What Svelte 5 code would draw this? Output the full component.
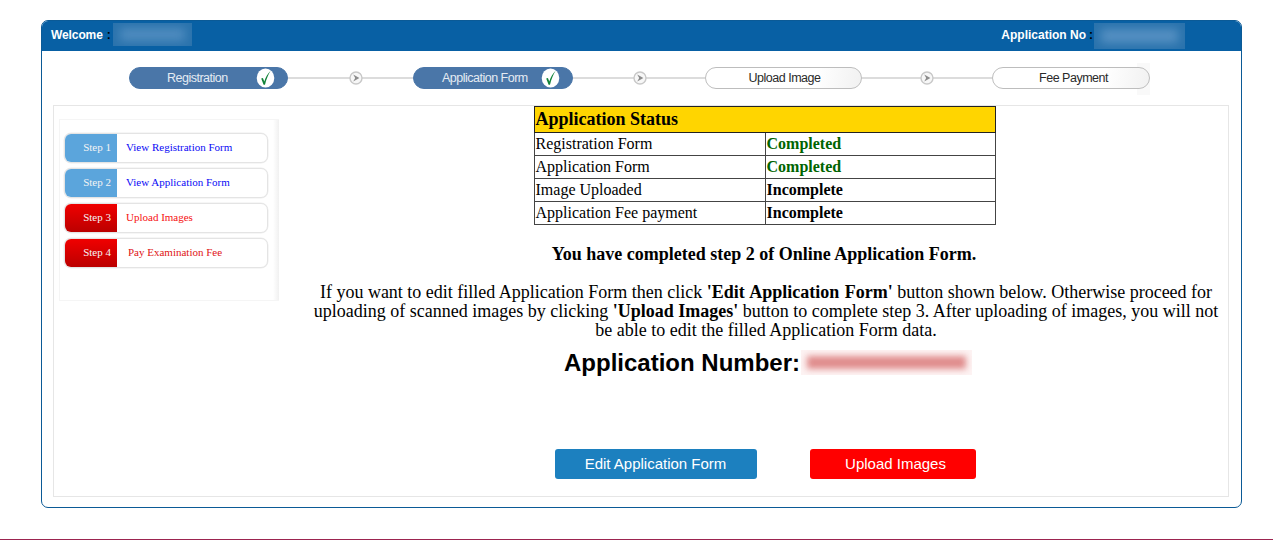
<script>
  const flow = [
    { label: 'Registration', done: true, w: 159, pad: 37, gap: 125, dot: 5, up: true },
    { label: 'Application Form', done: true, w: 160, pad: 28, gap: 132, dot: 1 },
    { label: 'Upload Image', done: false, w: 157, pad: 2, gap: 130, dot: 0, up: true },
    { label: 'Fee Payment', done: false, w: 158, pad: 5, last: true }
  ];
  const steps = [
    { n: 'Step 1', text: 'View Registration Form', kind: 'blue' },
    { n: 'Step 2', text: 'View Application Form', kind: 'blue' },
    { n: 'Step 3', text: 'Upload Images', kind: 'red' },
    { n: 'Step 4', text: 'Pay Examination Fee', kind: 'red', indent: true }
  ];
  const status = [
    ['Registration Form', 'Completed', true],
    ['Application Form', 'Completed', true],
    ['Image Uploaded', 'Incomplete', false],
    ['Application Fee payment', 'Incomplete', false]
  ];
</script>

<div class="page">
  <div class="panel">
    <header class="bar">
      <div class="who">
        <b>Welcome</b><em>:</em>
        <span class="redact name"><i></i></span>
      </div>
      <div class="who appno">
        <b>Application No</b><em>:</em>
        <span class="redact no"><i></i></span>
      </div>
    </header>

    <div class="flow">
      {#each flow as f, i}
        <div class="pill" class:done={f.done} class:last={f.last} style="width:{f.w}px;padding-left:{f.pad}px">
          <span class:up={f.up}>{f.label}</span>
          {#if f.done}
            <svg class="tick" width="19" height="20" viewBox="0 0 19 20" aria-hidden="true">
              <ellipse cx="9.5" cy="10" rx="8.8" ry="9.6" fill="#fff" />
              <path d="M5.2 10.6 L6.9 10 L8.3 13.4 C9.6 9.6 11.4 6 14.6 2.8 C12.2 6.8 10.2 11.4 9 16.8 L7.6 16.8 Z" fill="#12843a" />
            </svg>
          {/if}
        </div>
        {#if f.gap}
          <span class="link" style="width:{f.gap}px;padding-left:{f.dot * 2}px">
            <svg width="14" height="14" viewBox="0 0 14 14" aria-hidden="true">
              <circle cx="7" cy="7" r="6" fill="#f7f7f7" stroke="#c8c8c8" stroke-width="1.4" />
              <path d="M4.2 3.6 L10.4 7 L4.2 10.4 L6.2 7 Z" fill="#8c8c8c" />
            </svg>
          </span>
        {/if}
      {/each}
    </div>

    <div class="inner">
      <aside class="side">
        {#each steps as s}
          <div class="step">
            <span class="num {s.kind}">{s.n}</span>
            <span class="lbl {s.kind}" class:indent={s.indent}>{s.text}</span>
          </div>
        {/each}
      </aside>

      <main class="content">
        <table>
          <thead>
            <tr><th colspan="2">Application Status</th></tr>
          </thead>
          <tbody>
            {#each status as r}
              <tr>
                <td class="c1">{r[0]}</td>
                <td class="c2" class:ok={r[2]}>{r[1]}</td>
              </tr>
            {/each}
          </tbody>
        </table>

        <p class="lead">You have completed step 2 of Online Application Form.</p>

        <p class="info">
          If you want to edit filled Application Form then click <b class="wide">'Edit Application Form'</b> button shown below. Otherwise proceed for uploading of scanned images by clicking <b>'Upload Images'</b> button to complete step 3. After uploading of images, you will not be able to edit the filled Application Form data.
        </p>

        <div class="number">
          <b>Application Number:</b>
          <span class="redact pink"><i></i></span>
        </div>

        <div class="actions">
          <button class="btn edit">Edit Application Form</button>
          <button class="btn upload">Upload Images</button>
        </div>
      </main>
    </div>
  </div>
  <div class="rule"></div>
</div>

<style>
  :global(body) { margin: 0; background: #fff; }
  .page {
    height: 540px;
    box-sizing: border-box;
    padding: 20px 31px 0 41px;
    position: relative;
    overflow: hidden;
    font-family: "Liberation Serif", serif;
    color: #000;
  }
  .panel {
    height: 488px;
    box-sizing: border-box;
    border: 1px solid #0b5a96;
    border-radius: 7px;
    overflow: hidden;
  }
  .bar {
    height: 30px;
    background: #0860a4;
    display: flex;
    align-items: center;
    justify-content: space-between;
    font: bold 12px "Liberation Sans", sans-serif;
    color: #fff;
    padding: 0 56px 0 9px;
  }
  .who { display: flex; align-items: center; }
  .who b { margin-top: -2px; letter-spacing: -0.1px; }
  .who em { font-style: normal; color: #000; margin: -2px 2px 0 4px; }
  .appno b { letter-spacing: 0; }
  .appno em { margin: -2px 1px 0 3px; }
  .redact { display: block; overflow: hidden; }
  .redact i { display: block; }
  .name { width: 79px; height: 23px; background: #2a73ad; margin-top: -3px; }
  .name i { margin: 5px 7px; height: 13px; background: #4f8cbf; filter: blur(5px); }
  .no { width: 91px; height: 26px; background: #2a73ad; margin-top: -1px; }
  .no i { margin: 6px 7px; height: 14px; background: #5590c2; filter: blur(5px); }
  .flow {
    height: 54px;
    box-sizing: border-box;
    padding: 16px 0 0 87px;
    display: flex;
    align-items: flex-start;
  }
  .pill {
    height: 22px;
    box-sizing: border-box;
    flex: none;
    border-radius: 11px;
    border: 1px solid #bdbdbd;
    background: linear-gradient(100deg, #fff 70%, #f1f1f1);
    display: flex;
    align-items: center;
    justify-content: center;
    font: 12.5px "Liberation Sans", sans-serif;
    letter-spacing: -0.5px;
    color: #2a2a2a;
    position: relative;
  }
  .pill .up { margin-top: -1px; }
  .pill.done {
    background: #4a76a8;
    border-color: #4a76a8;
    color: #e4ebf3;
    justify-content: flex-start;
  }
  .pill.last::before {
    content: "";
    position: absolute;
    right: -1px;
    top: -5px;
    width: 13px;
    height: 32px;
    background: #f9f9f9;
    z-index: -1;
  }
  .tick { position: absolute; right: 12px; top: 0; }
  .link {
    flex: none;
    box-sizing: border-box;
    height: 22px;
    display: flex;
    align-items: center;
    justify-content: center;
    position: relative;
  }
  .link::before {
    content: "";
    position: absolute;
    left: 0;
    right: 0;
    top: 10px;
    height: 2px;
    background: #dcdcdc;
  }
  .link svg { position: relative; }
  .inner {
    height: 392px;
    box-sizing: border-box;
    margin: 0 12px 0 11px;
    border: 1px solid #e6e6e6;
    display: flex;
  }
  .side {
    flex: none;
    width: 220px;
    height: 182px;
    box-sizing: border-box;
    margin: 13px 0 0 5px;
    padding: 13px 11px 0 4px;
    border: 1px solid #f5f5f5;
    border-right: 0;
    background: linear-gradient(to right, #fff 213px, #eeeeee 220px);
    display: flex;
    flex-direction: column;
    gap: 5px;
  }
  .step {
    height: 30px;
    width: 204px;
    box-sizing: border-box;
    display: flex;
    border: 1px solid #e4e4e4;
    border-radius: 7px;
    box-shadow: 0 0 0 0.5px #eee;
    background: #fff;
    overflow: hidden;
    font-size: 11px;
    line-height: 27px;
    flex: none;
  }
  .num {
    width: 52px;
    box-sizing: border-box;
    padding-right: 6px;
    text-align: right;
    color: #f4f4f4;
    flex: none;
  }
  .num.blue { background: #5ba5dc; }
  .num.red { background: linear-gradient(#f00000, #bb0000); }
  .lbl { padding-left: 9px; white-space: nowrap; }
  .lbl.blue { color: #0a0af5; }
  .lbl.red { color: #f61010; }
  .lbl.indent { padding-left: 11px; color: #e01414; }
  .content {
    flex: 1;
    min-width: 0;
    padding: 0 4px 0 27px;
    text-align: center;
  }
  table {
    width: 462px;
    margin: 0 auto;
    border-collapse: collapse;
    table-layout: fixed;
    text-align: left;
    font-size: 16px;
  }
  th {
    height: 25px;
    padding: 0 0 0 0.5px;
    background: #ffd500;
    border: 1px solid #222;
    font-size: 18px;
    font-weight: bold;
    line-height: 23px;
  }
  td {
    height: 22px;
    padding: 0 1px 0 0.5px;
    border: 1px solid #444;
    line-height: 18px;
  }
  .c1 { width: 230px; }
  .c2 { font-weight: bold; padding-left: 1px; }
  .c2.ok { color: #006400; }
  .lead {
    margin: 19px 2px 0 0;
    font-size: 18px;
    font-weight: bold;
    line-height: 20px;
  }
  .info {
    margin: 19px 0 0 2px;
    font-size: 18px;
    line-height: 19px;
  }
  .wide { word-spacing: 1px; }
  .number {
    margin-top: 9px;
    padding-left: 6px;
    display: flex;
    justify-content: center;
    align-items: center;
    gap: 1px;
    height: 27px;
    font: bold 24px "Liberation Sans", sans-serif;
  }
  .pink { width: 171px; height: 25px; background: #fdf3f3; }
  .pink i { margin: 6px 6px; height: 13px; background: #e08c8c; filter: blur(3px); }
  .actions {
    margin-top: 73px;
    display: flex;
    gap: 53px;
    justify-content: center;
  }
  .btn {
    height: 30px;
    border: 0;
    border-radius: 3px;
    padding: 0 0 2px;
    color: #fff;
    font: 15px "Liberation Sans", sans-serif;
  }
  .edit { width: 202px; background: #1c80bf; }
  .upload { width: 166px; padding-left: 6px; background: #ff0000; }
  .rule {
    position: absolute;
    left: 0;
    right: 0;
    bottom: 0;
    height: 1px;
    background: #9c2450;
  }
</style>
